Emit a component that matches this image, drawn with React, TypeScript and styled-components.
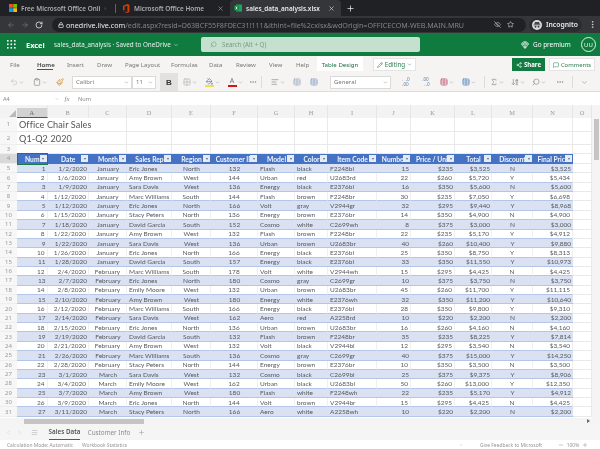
import React from "react";
import styled, { createGlobalStyle } from "styled-components";
import { ArrowLeft, ArrowRight, RotateCw, Lock, EyeOff, Star, MoreVertical, Plus, X, Search, Gem, Pencil, ChevronDown, Share2, MessageSquare, Undo2, Clipboard, Paintbrush, Grid2x2, PaintBucket, MoreHorizontal, AlignLeft, Table, Sigma, ArrowDownAZ, ChevronLeft, ChevronRight, Menu, Minus } from "lucide-react";

const Global = createGlobalStyle`
  html, body { margin: 0; padding: 0; background: #fff; }
  #root { width: 600px; height: 450px; overflow: hidden; }
  * { box-sizing: border-box; }
`;

const Page = styled.div`
  width: 600px; height: 450px; display: flex; flex-direction: column; overflow: hidden;
  font-family: "Noto Sans", "Liberation Sans", sans-serif; filter: blur(0.4px);
`;

/* Browser chrome */
const TabStrip = styled.div`height: 16px; background: #202124; display: flex; align-items: center; padding-left: 5px; color: #bdc1c6; flex: none;`;
const BrowserTab = styled.div<{ $active?: boolean; $w: number }>`
  width: ${p => p.$w}px; height: 16px; flex: none; display: flex; align-items: center; gap: 4px; padding: 0 6px 0 4px;
  background: ${p => (p.$active ? "#35363a" : "transparent")}; color: ${p => (p.$active ? "#e8eaed" : "#a9acb0")};
  font-size: 6.4px; white-space: nowrap; overflow: hidden; border-radius: 4px 4px 0 0;
`;
const TabTitle = styled.span`flex: 1; font-weight: 600;`;
const TabDivider = styled.div`width: 1px; height: 9px; background: #5f6368; margin: 0 2px; flex: none;`;
const NewTab = styled.div`margin-left: 5px; display: flex; color: #e8eaed;`;
const AddressBar = styled.div`height: 17px; background: #35363a; display: flex; align-items: center; flex: none; padding-left: 7px; color: #9aa0a6; gap: 6px;`;
const Omnibox = styled.div`
  width: 474px; height: 14px; margin-left: 3px; border-radius: 7px; background: #202124; display: flex; align-items: center; padding: 0 6px;
  font-size: 7.15px; color: #80848a; white-space: nowrap; gap: 2px;
`;
const Host = styled.span`color: #e8eaed;`;
const UrlText = styled.span`flex: 1;`;
const Incognito = styled.div`
  display: flex; align-items: center; gap: 4px; color: #e8eaed; font-size: 6.8px; font-weight: 600; flex: none; margin-left: -3px; height: 14px; padding: 0 4px 0 3px;
  background: #2b2c30; border-radius: 7px;
`;
const IncognitoBadge = styled.div`width: 10px; height: 10px; border-radius: 50%; background: #dadce0; flex: none;`;

/* Excel header */
const AppBar = styled.div`height: 23px; background: #0f7b3f; display: flex; align-items: center; color: #fff; flex: none; padding-left: 7px;`;
const Waffle = styled.svg`width: 9px; height: 9px; flex: none;`;
const Brand = styled.div`font-size: 7.4px; font-weight: 700; margin-left: 10px; width: 28px; flex: none;`;
const DocTitle = styled.div`font-size: 6.3px; width: 147px; flex: none; white-space: nowrap; color: #e6f2ea; display: flex; align-items: center; gap: 2px;`;
const SearchBox = styled.div`
  width: 219px; height: 15px; background: #c5e0cf; border-radius: 2px; color: #7b9987; display: flex; align-items: center; gap: 5px;
  padding-left: 9px; font-size: 6.2px; flex: none;
`;
const Premium = styled.div`margin-left: 101px; width: 60px; display: flex; align-items: center; gap: 4px; font-size: 6.4px; flex: none; white-space: nowrap;`;
const Avatar = styled.div`
  width: 15px; height: 15px; border: 1px solid #e4f1e9; border-radius: 50%; font-size: 6px; display: flex; align-items: center;
  justify-content: center; flex: none;
`;

/* Ribbon */
const RibbonTabs = styled.div`height: 17px; background: #f5f4f3; display: flex; align-items: flex-start; flex: none; padding-left: 10px; font-size: 6.1px; color: #666;`;
const RibbonTab = styled.div<{ $w: number; $active?: boolean; $white?: boolean }>`
  width: ${p => p.$w}px; height: 15px; flex: none; white-space: nowrap; padding-top: 4px; position: relative;
  color: ${p => (p.$active ? "#444" : p.$white ? "#1d6b40" : "#777")}; font-weight: ${p => (p.$active ? 600 : 400)};
  ${p => (p.$white ? "background:#fff; text-align:center;" : "")}
`;
const Underline = styled.div`position: absolute; left: 0; top: 13px; width: 16px; height: 1px; background: #1d7044;`;
const Editing = styled.div`
  width: 43px; height: 13px; margin-top: 2px; margin-left: 10px; background: #fff; border: 1px solid #e4e4e4; display: flex; align-items: center; justify-content: center; gap: 2px;
  color: #2d7a4f; flex: none; font-size: 6.2px;
`;
const ShareBtn = styled.div`
  width: 33px; height: 13px; margin-top: 2px; margin-left: 96px; background: #107c41; color: #fff; display: flex; align-items: center; justify-content: center; gap: 2px;
  font-weight: 700; flex: none; font-size: 6.1px;
`;
const CommentsBtn = styled.div`
  width: 46px; height: 13px; margin-top: 2px; margin-left: 4px; background: #fff; border: 1px solid #e4e4e4; color: #2d7a4f; display: flex; align-items: center; justify-content: center; gap: 2px;
  flex: none; font-size: 5.9px;
`;
const Toolbar = styled.div`height: 19px; background: #f5f4f3; display: flex; align-items: center; flex: none; color: #8a8a8a; border-bottom: 1px solid #dcdcdc;`;
const Tool = styled.div<{ $x: number; $w: number }>`
  margin-left: ${p => p.$x}px; width: ${p => p.$w}px; height: 14px; flex: none; display: flex; align-items: center; justify-content: center; gap: 1px;
`;
const SelectBox = styled.div<{ $x: number; $w: number }>`
  margin-left: ${p => p.$x}px; width: ${p => p.$w}px; height: 13px; flex: none; background: #fff; border: 1px solid #dadada; display: flex; align-items: center;
  justify-content: space-between; padding: 0 2px 0 3px; font-size: 6px; color: #777;
`;
const BoldBtn = styled.div`
  margin-left: 4px; width: 18px; height: 18px; background: #e3e1df; color: #333; font: 700 8px "Liberation Sans", sans-serif; display: flex; align-items: center; justify-content: center; flex: none;
`;
const ColorBar = styled.div<{ $c: string }>`width: 9px; height: 2px; background: ${p => p.$c};`;
const Stacked = styled.div`display: flex; flex-direction: column; align-items: center; gap: 0; font-size: 7px; line-height: 8px; color: #777;`;
const MiniNum = styled.div`font-size: 4.6px; line-height: 5px; color: #5e7fa0; text-align: center;`;
const Sep = styled.div<{ $x: number }>`margin-left: ${p => p.$x}px; width: 1px; height: 12px; background: #dcdcdc; flex: none;`;

/* Formula bar */
const FormulaBar = styled.div`height: 13px; background: #fff; display: flex; align-items: center; flex: none; font-size: 5.6px; color: #888;`;
const NameBox = styled.div`width: 60px; padding: 0 1px 0 3px; flex: none; display: flex; justify-content: space-between; align-items: center;`;
const Fx = styled.div`width: 14px; margin-right: 4px; text-align: center; font: italic 7px "Liberation Serif", serif; flex: none; color: #888;`;

/* Sheet */
const SheetArea = styled.div`flex: 1; display: flex; min-height: 0; background: #fff;`;
const SheetMain = styled.div`width: 592px; flex: none; display: flex; flex-direction: column;`;
const Row = styled.div<{ $h: number }>`display: flex; height: ${p => p.$h}px; flex: none;`;
const Corner = styled.div`width: 17px; flex: none; background: #f3f3f3; display: flex; align-items: flex-end; justify-content: flex-end; padding: 1px;`;
const CornerTri = styled.div`width: 0; height: 0; border-left: 7px solid transparent; border-bottom: 7px solid #b9b9b9;`;
const ColHead = styled.div<{ $w: number; $sel?: boolean }>`
  width: ${p => p.$w}px; flex: none; display: flex; align-items: center; justify-content: center; font-size: 6.4px; color: #999;
  font-family: "Liberation Serif", serif; padding-top: 2px;
  background: ${p => (p.$sel ? "linear-gradient(to bottom, #f3f3f3 3px, #d2d2d2 3px)" : "#f3f3f3")}; border-right: 1px solid #e6e6e6;
  ${p => (p.$sel ? "border-bottom: 1px solid #217346; color: #666;" : "")}
`;
const RowHead = styled.div<{ $sel?: boolean }>`
  width: 17px; flex: none; display: flex; align-items: center; justify-content: center; font-size: 6px; color: #999;
  background: ${p => (p.$sel ? "#d9d9d9" : "#f7f7f7")}; border-bottom: 1px solid #eee;
`;
const PlainCell = styled.div<{ $w: number }>`
  width: ${p => p.$w}px; flex: none; border-right: 1px solid #e9e9e9; border-bottom: 1px solid #e9e9e9; font-family: "Lato", sans-serif; white-space: nowrap;
  color: #555; font-size: 9.1px; letter-spacing: 0.1px; display: flex; align-items: center; padding: 1px 0 0 2px;
`;
const HeadCell = styled.div<{ $w: number }>`
  width: ${p => p.$w}px; flex: none; background: #4472c4; color: #f4f6fb; font: 700 6.7px "Lato", sans-serif; display: flex; align-items: center; position: relative;
`;
const HeadLabel = styled.div`flex: 1; min-width: 0; overflow: hidden; white-space: nowrap; text-align: center;`;
const FilterBtn = styled.div`
  position: absolute; right: 1px; top: 1.7px; width: 7px; height: 7px; background: #e6eaf2; display: flex; align-items: center; justify-content: center;
`;
const FilterArrow = styled.div`width: 0; height: 0; border-left: 1.6px solid transparent; border-right: 1.6px solid transparent; border-top: 2px solid #59667c;`;
const Selected = styled.div`position: absolute; inset: -1px 0 -1px 0; border: 1px solid #1f7a45;`;
const DataCell = styled.div<{ $w: number; $band: boolean; $align: string }>`
  width: ${p => p.$w}px; flex: none; font: 6.5px "Lato", sans-serif; color: #55585c; white-space: nowrap; overflow: hidden;
  display: flex; align-items: center; justify-content: ${p => p.$align}; padding: 0 2px;
  background: ${p => (p.$band ? "#d9e1f2" : "#fff")};
  border-bottom: 1px solid #b4c6e7;
  border-right: ${p => (p.$band ? "none" : "1px solid #f0f0f0")};
`;
const BlankCell = styled.div<{ $w: number }>`width: ${p => p.$w}px; flex: none; border-bottom: 1px solid #e9e9e9; border-right: 1px solid #e9e9e9;`;
const HScrollRow = styled.div`height: 7px; margin-top: 1px; flex: none; display: flex; align-items: center; background: #f4f4f4; padding-left: 24px;`;
const HThumb = styled.div`width: 120px; height: 5px; background: #c4c4c4;`;
const HSpacer = styled.div`flex: 1;`;
const TinyArrow = styled.div`width: 0; height: 0; margin-right: 2px; border-top: 2px solid transparent; border-bottom: 2px solid transparent; border-left: 3px solid #666;`;
const VScroll = styled.div`width: 8px; flex: none; background: #f4f4f4; display: flex; flex-direction: column; align-items: center; padding-top: 14px;`;
const VThumb = styled.div`width: 5px; height: 41px; background: #c4c4c4; flex: none;`;

/* Sheet tabs and status */
const SheetTabs = styled.div`height: 16px; flex: none; background: #f5f5f5; display: flex; align-items: stretch; font-size: 6.3px; color: #777; padding-left: 5px;`;
const NavIcon = styled.div<{ $w: number }>`width: ${p => p.$w}px; flex: none; display: flex; align-items: center; justify-content: flex-start; color: #d4d4d4;`;
const SheetTab = styled.div<{ $active?: boolean; $w: number }>`
  width: ${p => p.$w}px; flex: none; white-space: nowrap; display: flex; align-items: center; justify-content: center;
  color: ${p => (p.$active ? "#4f5a54" : "#8b8b8b")}; font-weight: ${p => (p.$active ? 600 : 400)}; border-bottom: ${p => (p.$active ? "1px solid #1f7a45" : "none")};
`;
const StatusBar = styled.div`
  height: 10px; flex: none; background: #fff; border-bottom: 1px solid #d0d0d0; display: flex; align-items: center; padding-left: 7px; font-size: 4.9px; color: #959595; white-space: nowrap;
`;
const StatusItem = styled.div<{ $w: number }>`width: ${p => p.$w}px; flex: none;`;
const Zoom = styled.div`width: 18px; flex: none; text-align: center;`;
const Caret = styled.div`width: 398px; flex: none; display: flex; justify-content: space-between; padding-right: 17px; align-items: center;`;

const widths = [30.5, 41.5, 38, 45, 39, 47, 37, 33, 49, 34, 44, 37, 41, 40];
const extra = 19;
const letters = "ABCDEFGHIJKLMN".split("");
const heads = ["Num", "Date", "Month", "Sales Rep", "Region", "Customer ID", "Model", "Color", "Item Code", "Number", "Price / Unit", "Total", "Discount", "Final Price"];
const aligns = ["flex-end", "flex-end", "center", "flex-start", "center", "center", "flex-start", "flex-start", "flex-start", "flex-end", "flex-end", "flex-end", "center", "flex-end"];
const raw = `1/2/2020|January|Eric Jones|North|132|Flash|black|F2248bl|15|$235|$3,525|N|$3,525
1/6/2020|January|Amy Brown|West|144|Urban|red|U2683rd|22|$260|$5,720|Y|$5,434
1/9/2020|January|Sara Davis|West|136|Energy|black|E2376bl|16|$350|$5,600|N|$5,600
1/12/2020|January|Marc Williams|South|144|Flash|brown|F2248br|30|$235|$7,050|Y|$6,698
1/12/2020|January|Eric Jones|North|166|Volt|gray|V2944gr|32|$295|$9,440|Y|$8,968
1/15/2020|January|Stacy Peters|North|136|Energy|brown|E2376br|14|$350|$4,900|N|$4,900
1/18/2020|January|David Garcia|South|152|Cosmo|white|C2699wh|8|$375|$3,000|N|$3,000
1/22/2020|January|Amy Brown|West|132|Flash|brown|F2248br|22|$235|$5,170|Y|$4,912
1/22/2020|January|Sara Davis|West|136|Urban|brown|U2683br|40|$260|$10,400|Y|$9,880
1/26/2020|January|Eric Jones|North|166|Energy|black|E2376bl|25|$350|$8,750|Y|$8,313
1/28/2020|January|David Garcia|South|157|Energy|black|E2376bl|33|$350|$11,550|Y|$10,973
2/4/2020|February|Marc Williams|South|178|Volt|white|V2944wh|15|$295|$4,425|N|$4,425
2/7/2020|February|Eric Jones|North|180|Cosmo|gray|C2699gr|10|$375|$3,750|N|$3,750
2/8/2020|February|Emily Moore|West|132|Urban|brown|U2683br|45|$260|$11,700|Y|$11,115
2/10/2020|February|Amy Brown|West|180|Energy|white|E2376wh|32|$350|$11,200|Y|$10,640
2/12/2020|February|Marc Williams|South|166|Energy|black|E2376bl|28|$350|$9,800|Y|$9,310
2/14/2020|February|Sara Davis|West|162|Aero|red|A2258rd|10|$220|$2,200|N|$2,200
2/15/2020|February|Eric Jones|North|136|Urban|brown|U2683br|16|$260|$4,160|N|$4,160
2/19/2020|February|David Garcia|South|132|Flash|brown|F2248br|35|$235|$8,225|Y|$7,814
2/21/2020|February|Amy Brown|West|132|Volt|black|V2944bl|12|$295|$3,540|N|$3,540
2/26/2020|February|Marc Williams|South|136|Cosmo|gray|C2699gr|40|$375|$15,000|Y|$14,250
2/28/2020|February|Stacy Peters|North|144|Energy|brown|E2376br|10|$350|$3,500|N|$3,500
3/1/2020|March|Sara Davis|West|132|Cosmo|black|C2699bl|25|$375|$9,375|Y|$8,906
3/4/2020|March|Emily Moore|West|162|Urban|black|U2683bl|50|$260|$13,000|Y|$12,350
3/7/2020|March|Amy Brown|West|180|Flash|white|F2248wh|22|$235|$5,170|Y|$4,912
3/9/2020|March|Eric Jones|North|144|Volt|brown|V2944br|15|$295|$4,425|N|$4,425
3/11/2020|March|Stacy Peters|North|166|Aero|white|A2258wh|10|$220|$2,200|N|$2,200`;
const rows = raw.split("\n").map((l, i) => [String(i + 1), ...l.split("|")]);
const ROW_H = 9.37;

const MsLogo = () => (
  <svg width="8" height="8" viewBox="0 0 8 8" style={{ flex: "none" }}>
    <rect width="3.8" height="3.8" fill="#f25022" /><rect x="4.2" width="3.8" height="3.8" fill="#7fba00" />
    <rect y="4.2" width="3.8" height="3.8" fill="#00a4ef" /><rect x="4.2" y="4.2" width="3.8" height="3.8" fill="#ffb900" />
  </svg>
);
const OfficeLogo = () => (
  <svg width="8" height="9" viewBox="0 0 8 9" style={{ flex: "none" }}>
    <path d="M1 1.8 5.4 0 7.4 .8V8L5.4 9 1 7.4l4.4.5V1.8L2.6 2.6V6L1 6.6Z" fill="#d83b01" />
  </svg>
);
const ExcelLogo = () => (
  <svg width="8" height="8" viewBox="0 0 8 8" style={{ flex: "none" }}>
    <rect x="2" y="0.5" width="6" height="7" fill="#21a366" /><rect y="1.5" width="5" height="5" fill="#107c41" />
    <path d="M1.3 2.6h.7l.5.9.5-.9h.7l-.8 1.4.8 1.4h-.7l-.5-.9-.5.9h-.7l.8-1.4Z" fill="#fff" />
  </svg>
);
const IncognitoIcon = () => (
  <svg width="10" height="10" viewBox="0 0 10 10">
    <path d="M2 4.6h6L7 2H3Z" fill="#444" /><rect x="1.4" y="4.6" width="7.2" height=".7" fill="#444" />
    <circle cx="3.5" cy="6.8" r="1" fill="#444" /><circle cx="6.5" cy="6.8" r="1" fill="#444" />
  </svg>
);

export default function App() {
  return (
    <Page>
      <Global />
      <TabStrip>
        <BrowserTab $w={108}>
          <MsLogo /><TabTitle>Free Microsoft Office Onli</TabTitle><X size={7} strokeWidth={2} />
        </BrowserTab>
        <TabDivider />
        <BrowserTab $w={112}>
          <OfficeLogo /><TabTitle>Microsoft Office Home</TabTitle><X size={7} strokeWidth={2} />
        </BrowserTab>
        <BrowserTab $w={111} $active>
          <ExcelLogo /><TabTitle>sales_data_analysis.xlsx</TabTitle><X size={7} strokeWidth={2} />
        </BrowserTab>
        <NewTab><Plus size={9} strokeWidth={2} /></NewTab>
      </TabStrip>
      <AddressBar>
        <ArrowLeft size={8} strokeWidth={2} color="#74787d" />
        <ArrowRight size={8} strokeWidth={2} color="#74787d" />
        <RotateCw size={8} strokeWidth={2.5} color="#dadce0" />
        <Omnibox>
          <Lock size={6} strokeWidth={3} color="#dadce0" />
          <UrlText><Host>onedrive.live.com</Host>/edit.aspx?resid=D63BCF55F8FDEC31!111&amp;ithint=file%2cxlsx&amp;wdOrigin=OFFICECOM-WEB.MAIN.MRU</UrlText>
          <EyeOff size={7} color="#bdc1c6" />
          <Star size={7} color="#dadce0" style={{ marginLeft: 4, marginRight: 6 }} />
        </Omnibox>
        <Incognito><IncognitoBadge><IncognitoIcon /></IncognitoBadge>Incognito</Incognito>
        <MoreVertical size={9} color="#dadce0" />
      </AddressBar>
      <AppBar>
        <Waffle viewBox="0 0 9 9" fill="#fff">
          {[0, 3.5, 7].flatMap(y => [0, 3.5, 7].map(x => <rect key={`${x}-${y}`} x={x} y={y} width="1.6" height="1.6" />))}
        </Waffle>
        <Brand>Excel</Brand>
        <DocTitle>sales_data_analysis · Saved to OneDrive <ChevronDown size={6} /></DocTitle>
        <SearchBox><Search size={7} style={{ transform: "scaleX(-1)" }} />Search (Alt + Q)</SearchBox>
        <Premium><Gem size={8} />Go premium</Premium>
        <Avatar>UU</Avatar>
      </AppBar>
      <RibbonTabs>
        <RibbonTab $w={27}>File</RibbonTab>
        <RibbonTab $w={30} $active>Home<Underline /></RibbonTab>
        <RibbonTab $w={30}>Insert</RibbonTab>
        <RibbonTab $w={28}>Draw</RibbonTab>
        <RibbonTab $w={46}>Page Layout</RibbonTab>
        <RibbonTab $w={38}>Formulas</RibbonTab>
        <RibbonTab $w={27}>Data</RibbonTab>
        <RibbonTab $w={33}>Review</RibbonTab>
        <RibbonTab $w={27}>View</RibbonTab>
        <RibbonTab $w={21}>Help</RibbonTab>
        <RibbonTab $w={46} $white>Table Design</RibbonTab>
        <Editing><Pencil size={6} />Editing <ChevronDown size={5} /></Editing>
        <ShareBtn><Share2 size={6} />Share</ShareBtn>
        <CommentsBtn><MessageSquare size={6} />Comments</CommentsBtn>
      </RibbonTabs>
      <Toolbar>
        <Tool $x={9} $w={15}><Undo2 size={8} color="#c4c4c4" /><ChevronDown size={5} /></Tool>
        <Tool $x={8} $w={15}><Clipboard size={8} /><ChevronDown size={5} /></Tool>
        <Tool $x={8} $w={10}><Paintbrush size={8} color="#c98a3a" /></Tool>
        <SelectBox $x={7} $w={60}>Calibri<ChevronDown size={5} /></SelectBox>
        <SelectBox $x={0} $w={24}>11<ChevronDown size={5} /></SelectBox>
        <BoldBtn>B</BoldBtn>
        <Tool $x={4} $w={16}><Grid2x2 size={8} color="#b4b4b4" /><ChevronDown size={5} /></Tool>
        <Tool $x={6} $w={16}><Stacked><PaintBucket size={7} color="#4f6bb0" /><ColorBar $c="#f4e23c" /></Stacked><ChevronDown size={5} /></Tool>
        <Tool $x={7} $w={16}><Stacked>A<ColorBar $c="#d4161c" /></Stacked><ChevronDown size={5} /></Tool>
        <Tool $x={5} $w={9}><MoreHorizontal size={8} /></Tool>
        <Sep $x={4} />
        <Tool $x={8} $w={16}><AlignLeft size={8} /><ChevronDown size={5} /></Tool>
        <Tool $x={4} $w={14}><Table size={8} color="#9ab" /></Tool>
        <Tool $x={4} $w={11}><Table size={8} color="#7f9fc4" /></Tool>
        <SelectBox $x={11} $w={61}>General<ChevronDown size={5} /></SelectBox>
        <Tool $x={9} $w={11}><MiniNum>←.0<br />.00</MiniNum></Tool>
        <Tool $x={10} $w={9}><MiniNum>.00<br />→.0</MiniNum></Tool>
        <Tool $x={9} $w={15}><Table size={8} color="#c0506a" /><ChevronDown size={5} /></Tool>
        <Tool $x={7} $w={16}><Table size={8} color="#4a7fc0" /><ChevronDown size={5} /></Tool>
        <Sep $x={7} />
        <Tool $x={4} $w={15}><Sigma size={8} /><ChevronDown size={5} /></Tool>
        <Tool $x={6} $w={15}><ArrowDownAZ size={8} /><ChevronDown size={5} /></Tool>
        <Tool $x={6} $w={16}><Search size={8} style={{ transform: "scaleX(-1)" }} /><ChevronDown size={5} /></Tool>
        <Tool $x={8} $w={10}><MoreHorizontal size={8} /></Tool>
        <Sep $x={7} />
        <Tool $x={7} $w={8}><ChevronDown size={7} /></Tool>
      </Toolbar>
      <FormulaBar>
        <NameBox>A4<ChevronDown size={4} /></NameBox>
        <Fx>fx</Fx>
        Num
      </FormulaBar>
      <SheetArea>
        <SheetMain>
          <Row $h={13}>
            <Corner><CornerTri /></Corner>
            {letters.map((l, i) => <ColHead key={l} $w={widths[i]} $sel={i === 0}>{l}</ColHead>)}
            <ColHead $w={extra}>O</ColHead>
          </Row>
          {[["1", "Office Chair Sales", 13.5], ["2", "Q1-Q2 2020", 13.5], ["3", "", 8.6]].map(([n, t, h]) => (
            <Row key={n as string} $h={h as number}>
              <RowHead>{n}</RowHead>
              <PlainCell $w={widths[0] + widths[1] + widths[2]}>{t}</PlainCell>
              {widths.slice(3).map((w, i) => <BlankCell key={i} $w={w} />)}
              <BlankCell $w={extra} />
            </Row>
          ))}
          <Row $h={10.4}>
            <RowHead $sel>4</RowHead>
            {heads.map((h, i) => (
              <HeadCell key={h} $w={widths[i]}>
                <HeadLabel>{h}</HeadLabel>
                <FilterBtn><FilterArrow /></FilterBtn>
                {i === 0 && <Selected />}
              </HeadCell>
            ))}
            <BlankCell $w={extra} />
          </Row>
          {rows.map((r, idx) => (
            <Row key={idx} $h={ROW_H}>
              <RowHead>{idx + 5}</RowHead>
              {r.map((v, i) => <DataCell key={i} $w={widths[i]} $band={idx % 2 === 0} $align={aligns[i]}>{v}</DataCell>)}
              <BlankCell $w={extra} />
            </Row>
          ))}
          <HScrollRow><HThumb /><HSpacer /><TinyArrow /></HScrollRow>
        </SheetMain>
        <VScroll><VThumb /></VScroll>
      </SheetArea>
      <SheetTabs>
        <NavIcon $w={11}><ChevronLeft size={7} /></NavIcon>
        <NavIcon $w={15}><ChevronRight size={7} /></NavIcon>
        <NavIcon $w={18}><Menu size={7} color="#b4b4b4" /></NavIcon>
        <SheetTab $active $w={31}>Sales Data</SheetTab>
        <SheetTab $w={58}>Customer Info</SheetTab>
        <NavIcon $w={10}><Plus size={7} color="#a5a5a5" /></NavIcon>
      </SheetTabs>
      <StatusBar>
        <StatusItem $w={75}>Calculation Mode: Automatic</StatusItem>
        <Caret>Workbook Statistics<ChevronDown size={4} /></Caret>
        <StatusItem $w={78}>Give Feedback to Microsoft</StatusItem>
        <Minus size={6} />
        <Zoom>100%</Zoom>
        <Plus size={6} />
      </StatusBar>
    </Page>
  );
}
